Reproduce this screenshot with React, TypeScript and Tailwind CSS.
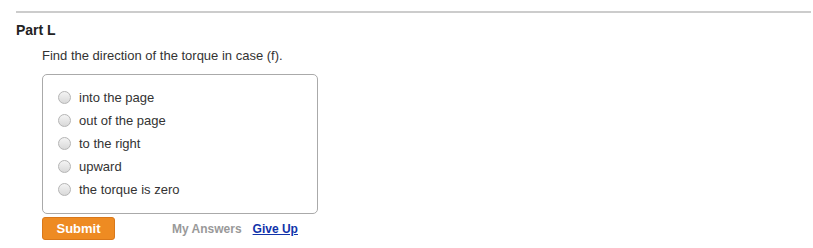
const OPTIONS = ["into the page", "out of the page", "to the right", "upward", "the torque is zero"];

const Radio = () => (
  <span className="inline-block w-[13px] h-[13px] rounded-full border border-[#b5b5b5] bg-gradient-to-b from-[#f4f4f4] to-[#d9d9d9] shrink-0" />
);

export default function App() {
  return (
    <div className="w-[813px] h-[248px] bg-white font-['Liberation_Sans',Arial,sans-serif] text-[13px] text-[#333]">
      <div className="ml-4 mr-[2px] pt-[11px]">
        <div className="h-[2px] bg-[#cccccc]" />
        <h2 className="mt-[9px] text-[14px] leading-[16px] font-bold text-[#222]">Part L</h2>
      </div>
      <div className="ml-[42px] mt-[10px]">
        <p className="leading-[15px]">Find the direction of the torque in case (f).</p>
        <div className="mt-[11px] w-[276px] h-[140px] border border-[#aaaaaa] rounded-[5px] pt-[11px] pl-[15px]">
          {OPTIONS.map((option) => (
            <label key={option} className="flex items-center h-[23px] gap-[8px]">
              <Radio />
              <span className="leading-[15px]">{option}</span>
            </label>
          ))}
        </div>
        <div className="mt-[3px] flex items-center">
          <button className="w-[73px] h-[23px] rounded-[3px] bg-[#ee8b22] border border-[#d9781a] text-white font-bold text-[13px] leading-[15px]">
            Submit
          </button>
          <span className="ml-[57px] font-bold text-[12px] text-[#999999]">My Answers</span>
          <a className="ml-[11px] font-bold text-[12px] text-[#1133aa] underline">Give Up</a>
        </div>
      </div>
    </div>
  );
}
